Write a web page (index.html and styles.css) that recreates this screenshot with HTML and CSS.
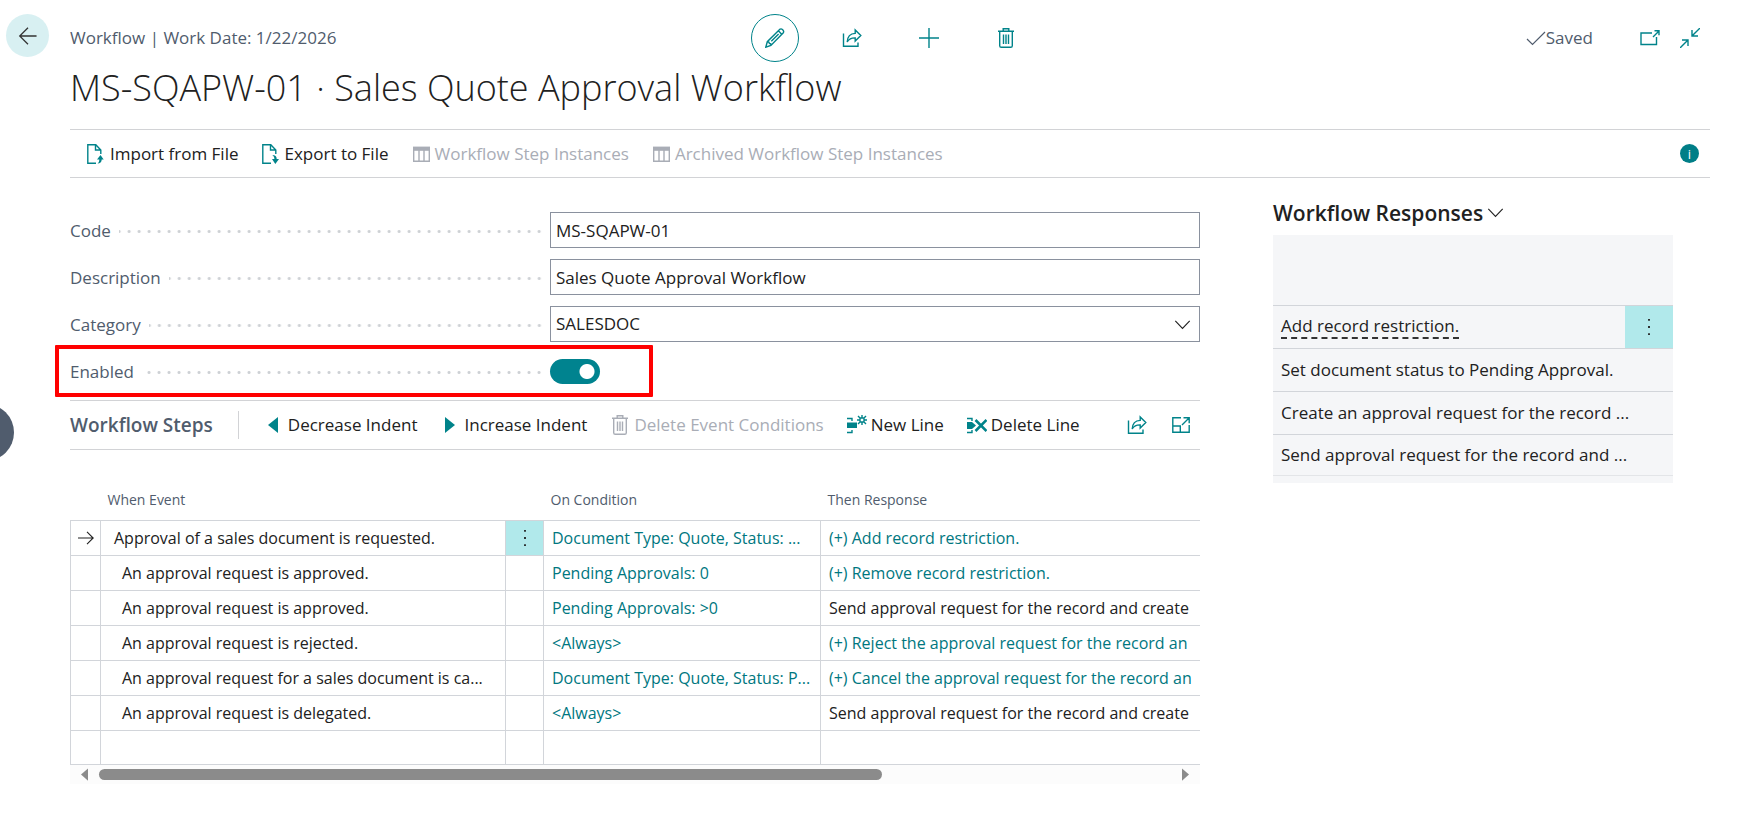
FILE: index.html
```html
<!DOCTYPE html>
<html lang="en">

<head>
  <meta charset="UTF-8">
  <meta name="viewport" content="width=device-width, initial-scale=1.0">
  <title>Workflow</title>
  <link rel="stylesheet" href="styles.css">
</head>

<body>
  <!-- shared icons -->
  <svg class="sprite" aria-hidden="true">
    <symbol id="icon-share" viewBox="0 0 20 20">
      <path d="M1.5 5.5v12.8h14.5v-3.8" />
      <path d="M5.2 14c.3-5.600 3-8.400 8-8.600V2l5.600 5.600-5.600 5.400V9.900C9.600 9.800 7 11 5.200 14z" />
    </symbol>
    <symbol id="icon-trash" viewBox="0 0 20 20">
      <path d="M2 3.300h16M7.200 3V.700h5.600V3M3.700 3.500v14.200q0 1.600 1.600 1.600h9.400q1.600 0 1.600-1.600V3.500M7.500 6.500v9.500M10 6.500v9.500M12.500 6.500v9.500" />
    </symbol>
    <symbol id="icon-table" viewBox="0 0 20 20">
      <path d="M2.700 3.500h15.600v13.800H2.700zM8 6v11M13 6v11" />
      <path class="solid" d="M2 2.800h17v4H2z" />
    </symbol>
    <symbol id="icon-dots" viewBox="0 0 20 20">
      <path class="solid" d="M9 1h2v2H9zM9 9h2v2H9zM9 17h2v2H9z" />
    </symbol>
  </svg>

  <button class="back" aria-label="Back">
    <svg class="icon" viewBox="0 0 20 20"><path d="M19.500 10H.8M10 .8L.8 10l9.200 9.200" /></svg>
  </button>
  <div class="side-handle"></div>

  <div class="page">
    <header class="topbar">
      <div class="crumb">Workflow | Work Date: 1/22/2026</div>
      <div class="actions">
        <button class="round active" aria-label="Edit">
          <svg class="icon" viewBox="0 0 20 20"><path d="M.8 19.200l1.500-5.500L14.600 1.400q1.500-1.200 3.100.3 1.700 1.700.4 3.300L5.900 17.500zM2.300 13.700l1.600.3.500 1.500 1.300.4.3 1.600M13.400 2.800l3.500 3.600M6.300 13.200l7.300-7.200" /></svg>
        </button>
        <button class="round" aria-label="Share"><svg class="icon"><use href="#icon-share" /></svg></button>
        <button class="round" aria-label="New"><svg class="icon" viewBox="0 0 20 20"><path d="M10 0v20M0 10h20" /></svg></button>
        <button class="round" aria-label="Delete"><svg class="icon"><use href="#icon-trash" /></svg></button>
      </div>
      <div class="status">
        <span class="saved">
          <svg class="icon" viewBox="0 0 20 20"><path d="M1 11l5.500 5.500L19 4" /></svg>Saved
        </span>
        <button aria-label="Open in new window">
          <svg class="icon" viewBox="0 0 20 20"><path d="M12 5H1v11.500h15.500V9M13 9l6-6M14.500 2.800H19v4.500" /></svg>
        </button>
        <button aria-label="Collapse">
          <svg class="icon" viewBox="0 0 20 20"><path d="M20 0l-8 8M12 2v6h6M0 20l8-8M2 12h6v6" /></svg>
        </button>
      </div>
    </header>

    <h1>MS-SQAPW-01 · Sales Quote Approval Workflow</h1>

    <div class="toolbar">
      <button>
        <svg class="icon" viewBox="0 0 20 20"><path d="M10 19.200H1.800V.8h8l5 5.200v4M9.500.8V6h5.300" /><path class="solid" d="M14.500 11l-3.500 4.500h2.300c0 2-.5 3-1.800 4 2.600 0 4.200-1.300 4.200-4h2z" /></svg>
        Import from File
      </button>
      <button>
        <svg class="icon" viewBox="0 0 20 20"><path d="M10 19.200H1.800V.8h8l5 5.200v4M9.500.8V6h5.300" /><path class="solid" d="M11.200 11c3 0 4.500 1.300 4.500 4H18l-3.700 5-3.300-5h2.400c0-2-.7-3-2.200-4z" /></svg>
        Export to File
      </button>
      <button disabled><svg class="icon"><use href="#icon-table" /></svg>Workflow Step Instances</button>
      <button disabled><svg class="icon"><use href="#icon-table" /></svg>Archived Workflow Step Instances</button>
      <button class="info" aria-label="Details">i</button>
    </div>

    <div class="content">
      <main>
        <div class="fields">
          <div class="field">
            <label for="code">Code</label><span class="leader"></span>
            <input type="text" id="code" value="MS-SQAPW-01">
          </div>
          <div class="field">
            <label for="description">Description</label><span class="leader"></span>
            <input type="text" id="description" value="Sales Quote Approval Workflow">
          </div>
          <div class="field">
            <label for="category">Category</label><span class="leader"></span>
            <div class="select">
              <select id="category">
                <option>SALESDOC</option>
              </select>
              <svg class="chevron" viewBox="0 0 16 10"><path d="M.8.8L8 8.500 15.200.8" /></svg>
            </div>
          </div>
          <div class="field highlight">
            <label for="enabled">Enabled</label><span class="leader"></span>
            <div class="toggle"><input type="checkbox" id="enabled" checked></div>
          </div>
        </div>

        <div class="toolbar lines-bar">
          <h2>Workflow Steps</h2>
          <button><svg class="icon" viewBox="0 0 20 20"><path class="solid" d="M14 2v16L4 10z" /></svg>Decrease Indent</button>
          <button><svg class="icon" viewBox="0 0 20 20"><path class="solid" d="M5 2v16l10-8z" /></svg>Increase Indent</button>
          <button disabled><svg class="icon"><use href="#icon-trash" /></svg>Delete Event Conditions</button>
          <button>
            <svg class="icon" viewBox="0 0 20 20"><path d="M0 3.500h5V6M0 17.500h5V15M15 0v3M15 7v3M10 5h3M17 5h3M11 1l2.500 2.500M16.500 6.500L19 9M19 1l-2.500 2.500M13.500 6.500L11 9M13 3h4v4h-4z" /><path class="solid" d="M0 7.500h10V13H0z" /></svg>
            New Line
          </button>
          <button>
            <svg class="icon" viewBox="0 0 20 20"><path d="M0 3.500h5V6M0 17.500h5V15" /><path class="solid" d="M0 7h5l4 3.500L5 14H0z" /><path class="thick" d="M8.500 5l11 11M19.500 5l-11 11" /></svg>
            Delete Line
          </button>
          <div class="right">
            <button aria-label="Share"><svg class="icon"><use href="#icon-share" /></svg></button>
            <button aria-label="Expand">
              <svg class="icon" viewBox="0 0 20 20"><path d="M10 2.800H1.800v14.500h16.400V10M1.800 11h7.500v6M11 10l7-7M12.500 2.800h5.700v5.500" /></svg>
            </button>
          </div>
        </div>

        <div class="grid">
          <table>
            <colgroup>
              <col class="c-mark">
              <col class="c-event">
              <col class="c-menu">
              <col class="c-cond">
              <col>
            </colgroup>
            <thead>
              <tr>
                <th></th>
                <th>When Event</th>
                <th></th>
                <th>On Condition</th>
                <th>Then Response</th>
              </tr>
            </thead>
            <tbody>
              <tr class="current">
                <td><svg class="arrow" viewBox="0 0 16 14"><path d="M0 7h15M9 .8L15.200 7 9 13.200" /></svg></td>
                <td>Approval of a sales document is requested.</td>
                <td><button aria-label="More options"><svg class="dots"><use href="#icon-dots" /></svg></button></td>
                <td><a href="#">Document Type: Quote, Status: ...</a></td>
                <td><a href="#">(+) Add record restriction.</a></td>
              </tr>
              <tr>
                <td></td>
                <td>An approval request is approved.</td>
                <td></td>
                <td><a href="#">Pending Approvals: 0</a></td>
                <td><a href="#">(+) Remove record restriction.</a></td>
              </tr>
              <tr>
                <td></td>
                <td>An approval request is approved.</td>
                <td></td>
                <td><a href="#">Pending Approvals: &gt;0</a></td>
                <td>Send approval request for the record and create</td>
              </tr>
              <tr>
                <td></td>
                <td>An approval request is rejected.</td>
                <td></td>
                <td><a href="#">&lt;Always&gt;</a></td>
                <td><a href="#">(+) Reject the approval request for the record an</a></td>
              </tr>
              <tr>
                <td></td>
                <td>An approval request for a sales document is ca...</td>
                <td></td>
                <td><a href="#">Document Type: Quote, Status: P...</a></td>
                <td><a href="#">(+) Cancel the approval request for the record an</a></td>
              </tr>
              <tr>
                <td></td>
                <td>An approval request is delegated.</td>
                <td></td>
                <td><a href="#">&lt;Always&gt;</a></td>
                <td>Send approval request for the record and create</td>
              </tr>
              <tr>
                <td></td>
                <td></td>
                <td></td>
                <td></td>
                <td></td>
              </tr>
            </tbody>
          </table>
        </div>
        <div class="scrollbar">
          <svg viewBox="0 0 8 14"><path d="M8 0v14L0 7z" /></svg>
          <div class="track"><div class="thumb"></div></div>
          <svg viewBox="0 0 8 14"><path d="M0 0v14l8-7z" /></svg>
        </div>
      </main>

      <aside>
        <h3>Workflow Responses <svg class="chevron" viewBox="0 0 16 10"><path d="M.8.8L8 8.500 15.200.8" /></svg></h3>
        <ul class="responses">
          <li>
            <a href="#">Add record restriction.</a>
            <button aria-label="More options"><svg class="dots"><use href="#icon-dots" /></svg></button>
          </li>
          <li><span>Set document status to Pending Approval.</span></li>
          <li><span>Create an approval request for the record ...</span></li>
          <li><span>Send approval request for the record and ...</span></li>
        </ul>
      </aside>
    </div>
  </div>
</body>

</html>
```
FILE: styles.css
```css
*,
*::after {
  box-sizing: border-box;
}

body {
  margin: 0;
  background-color: #fff;
  color: #212121;
  font-family: "Open Sans", "Noto Sans", sans-serif;
  font-size: 17px;
  line-height: 24px;
}

button {
  display: flex;
  align-items: center;
  padding: 0;
  border: none;
  background: none;
  color: inherit;
  font: inherit;
  white-space: nowrap;
  cursor: pointer;
}

a {
  color: #00777f;
  text-decoration: none;
}

.sprite {
  position: absolute;
  width: 0;
  height: 0;
}

.icon,
.chevron,
.arrow,
.dots {
  flex: none;
  fill: none;
  stroke: currentColor;
  stroke-width: 1.4;
}

.icon {
  width: 20px;
  height: 20px;
  color: #00838a;
}

.chevron {
  width: 17px;
  height: 10px;
  stroke-width: 1.1;
}

.arrow {
  display: block;
  width: 16px;
  height: 14px;
  margin: 0 auto;
  stroke-width: 1.1;
}

.dots {
  width: 18px;
  height: 18px;
}

.solid {
  fill: currentColor;
  stroke: none;
}

.thick {
  stroke-width: 2.6;
}

/* floating bits on the left edge */
.back {
  position: absolute;
  left: 6px;
  top: 14px;
  justify-content: center;
  width: 43px;
  height: 43px;
  border-radius: 50%;
  background-color: #d8f0f2;
}

.back .icon {
  height: 18px;
  color: #333;
  stroke-width: 1.4;
}

.side-handle {
  position: absolute;
  left: -43px;
  top: 404px;
  width: 57px;
  height: 57px;
  border-radius: 50%;
  background-color: #505c6d;
}

.page {
  padding: 14px 54px 30px 70px;
}

.topbar {
  display: grid;
  grid-template-columns: 1fr auto 1fr;
  align-items: center;
}

.crumb,
.saved {
  color: #505c6d;
}

.actions {
  display: flex;
  gap: 29px;
}

.round {
  justify-content: center;
  width: 48px;
  height: 48px;
  border: 1px solid transparent;
  border-radius: 50%;
}

.round.active {
  border-color: #00838a;
}

.status {
  display: flex;
  justify-content: flex-end;
  align-items: center;
  padding-right: 10px;
}

.status button {
  margin-left: 20px;
}

.saved {
  display: flex;
  align-items: center;
  margin-right: 27px;
}

.saved .icon {
  color: #505c6d;
  stroke-width: 1.2;
}

h1 {
  margin: 0 0 15px;
  font-size: 36px;
  font-weight: 300;
  line-height: 52px;
}

.toolbar {
  display: flex;
  align-items: center;
  gap: 22px;
  height: 49px;
  padding: 0 11px 0 16px;
  border-top: 1px solid #d2d3d6;
  border-bottom: 1px solid #d2d3d6;
}

.toolbar button {
  gap: 4px;
}

.toolbar button:disabled,
.toolbar button:disabled .icon {
  color: #a9adb6;
}

.toolbar .info {
  justify-content: center;
  width: 19px;
  height: 19px;
  margin-left: auto;
  border-radius: 50%;
  background-color: #007e87;
  color: #fff;
  font-size: 13px;
}

.content {
  display: flex;
  gap: 73px;
  padding-right: 37px;
}

main {
  flex: 1;
  min-width: 0;
}

.fields {
  display: flex;
  flex-direction: column;
  gap: 11px;
  padding: 34px 0 11px;
}

.field {
  position: relative;
  display: flex;
  align-items: center;
  height: 36px;
}

.field label {
  padding-top: 2px;
  color: #505c6d;
}

.leader {
  flex: 1;
  height: 3px;
  margin: 2px 6px 0 8px;
  background: radial-gradient(circle, #cdd0d4 1px, transparent 2px) right / 10px 3px repeat-x;
}

.field input[type="text"],
.select,
.toggle {
  flex: none;
  width: 650px;
}

.field input[type="text"],
.field select {
  height: 36px;
  padding: 0 5px;
  border: 1px solid #8a919e;
  border-radius: 0;
  background-color: #fff;
  color: #212121;
  font: inherit;
}

.select {
  position: relative;
}

.field select {
  display: block;
  width: 100%;
  appearance: none;
}

.select .chevron {
  position: absolute;
  right: 9px;
  top: 14px;
  pointer-events: none;
}

.toggle input {
  display: block;
  width: 50px;
  height: 25px;
  margin: 0;
  border-radius: 13px;
  background: radial-gradient(circle at 37px 50%, #fff 7px, #00838f 8px);
  appearance: none;
}

/* red frame round the Enabled row */
.highlight::after {
  content: "";
  position: absolute;
  left: -15px;
  top: -8px;
  width: 598px;
  height: 52px;
  border: 4px solid #f00;
  border-radius: 1px;
  pointer-events: none;
}

.lines-bar {
  gap: 23px;
  height: 50px;
  padding: 0 9px 0 0;
}

h2 {
  margin: 0 2px 0 0;
  padding-right: 25px;
  border-right: 1px solid #d2d3d6;
  color: #505c6d;
  font-size: 19px;
  font-weight: 600;
  line-height: 28px;
  white-space: nowrap;
}

.right {
  display: flex;
  gap: 24px;
  margin-left: auto;
}

.grid {
  padding-top: 35px;
  overflow: hidden;
}

table {
  width: 100%;
  border-collapse: collapse;
  table-layout: fixed;
}

.c-mark {
  width: 30px;
}

.c-event {
  width: 405px;
}

.c-menu {
  width: 38px;
}

.c-cond {
  width: 277px;
}

th {
  height: 35px;
  padding: 0 7px 4px;
  color: #505c6d;
  font-size: 14px;
  font-weight: 400;
  text-align: left;
}

td {
  height: 35px;
  padding: 0 8px;
  border: 1px solid #d2d5da;
  font-size: 16px;
  white-space: nowrap;
}

td:first-child,
td:nth-child(3) {
  padding: 0;
}

td:nth-child(2) {
  padding-left: 21px;
}

.current td:nth-child(2) {
  padding-left: 13px;
}

th:last-child,
td:last-child {
  border-right: none;
}

td:last-child {
  padding-right: 0;
}

tr:last-child td {
  height: 34px;
}

.current button,
.responses button {
  justify-content: center;
  background-color: #b1e9eb;
}

.current button {
  width: 100%;
  height: 34px;
}

.scrollbar {
  display: flex;
  align-items: center;
  gap: 11px;
  height: 19px;
  padding: 0 11px;
  background-color: #fcfcfc;
}

.scrollbar svg {
  width: 7px;
  height: 13px;
  fill: #8b8b8b;
}

.track {
  flex: 1;
}

.thumb {
  width: 73%;
  height: 11px;
  border-radius: 6px;
  background-color: #8b8b8b;
}

aside {
  width: 400px;
  padding-top: 20px;
}

h3 {
  display: flex;
  align-items: center;
  gap: 4px;
  margin: 0;
  font-size: 21px;
  font-weight: 600;
  line-height: 30px;
  white-space: nowrap;
}

.responses {
  margin: 7px 0 0;
  padding: 70px 0 7px;
  background-color: #f5f6f8;
  list-style: none;
}

.responses li {
  display: flex;
  justify-content: space-between;
  align-items: center;
  height: 43px;
  padding-left: 8px;
  border-top: 1px solid #d2d5da;
  white-space: nowrap;
}

.responses li:last-child {
  height: 42px;
  border-bottom: 1px solid #e3e5e8;
}

.responses a {
  border-bottom: 2px dashed #333;
  color: #212121;
  line-height: 22px;
}

.responses button {
  width: 48px;
  height: 42px;
}
```
